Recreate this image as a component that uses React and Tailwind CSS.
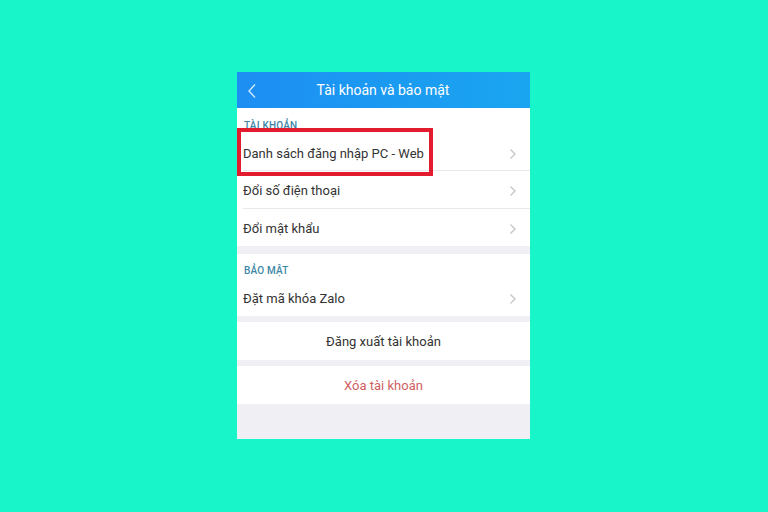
import React from "react";

const Chevron = () => (
  <svg width="8" height="12" viewBox="0 0 8 12" className="shrink-0">
    <path d="M1.5 1.5 L6 6 L1.5 10.5" fill="none" stroke="#c4c4c9" strokeWidth="1.3" />
  </svg>
);

function Row({ label, border = true, h = "h-[37px]", children }) {
  return (
    <div className={`relative flex items-center justify-between pl-[6px] pr-[13px] pt-[2px] ${h}`}>
      <span className="text-[13px] text-[#333333]">{label}</span>
      <Chevron />
      {border && <div className="absolute bottom-0 left-[6px] right-0 h-px bg-[#e9e9ee]" />}
      {children}
    </div>
  );
}

export default function App() {
  return (
    <div
      className="w-[768px] h-[512px] bg-[#17f5c9] flex justify-center pt-[72px]"
      style={{ fontFamily: "Roboto, 'Noto Sans', 'Liberation Sans', sans-serif" }}
    >
      <div className="w-[293px] h-[367px] bg-[#efeff4] flex flex-col ml-[-1px]">
        <div className="h-[36px] bg-gradient-to-r from-[#1d8ef3] to-[#1aa5f0] flex items-center relative">
          <svg width="10" height="16" viewBox="0 0 10 16" className="absolute left-[10px] top-[11px]">
            <path d="M8 1.5 L2 8 L8 14.5" fill="none" stroke="#cfe8ff" strokeWidth="1.4" />
          </svg>
          <div className="flex-1 text-center text-white text-[14px] pr-[1px]">Tài khoản và bảo mật</div>
        </div>
        <div className="bg-white">
          <div className="h-[26px] flex items-end pl-[7px] pb-[1px] text-[10px] font-medium text-[#3d86a8] tracking-[0.2px]">
            TÀI KHOẢN
          </div>
          <Row label="Danh sách đăng nhập PC - Web" h="h-[37px]">
            <div className="absolute left-0 top-[-6px] w-[196px] h-[48px] border-[4px] border-[#e31b2e]" />
          </Row>
          <Row label="Đổi số điện thoại" h="h-[38px]" />
          <Row label="Đổi mật khẩu" h="h-[37px]" border={false} />
        </div>
        <div className="h-[8px]" />
        <div className="bg-white">
          <div className="h-[25px] flex items-end pl-[7px] pb-[1px] text-[10px] font-medium text-[#3d86a8] tracking-[0.2px]">
            BẢO MẬT
          </div>
          <Row label="Đặt mã khóa Zalo" h="h-[37px]" border={false} />
        </div>
        <div className="h-[6px]" />
        <div className="bg-white h-[38px] flex items-center justify-center pt-[2px] text-[13px] text-[#333333]">
          Đăng xuất tài khoản
        </div>
        <div className="h-[6px]" />
        <div className="bg-white h-[38px] flex items-center justify-center pt-[2px] text-[13px] text-[#cf5f63]">
          Xóa tài khoản
        </div>
      </div>
    </div>
  );
}
